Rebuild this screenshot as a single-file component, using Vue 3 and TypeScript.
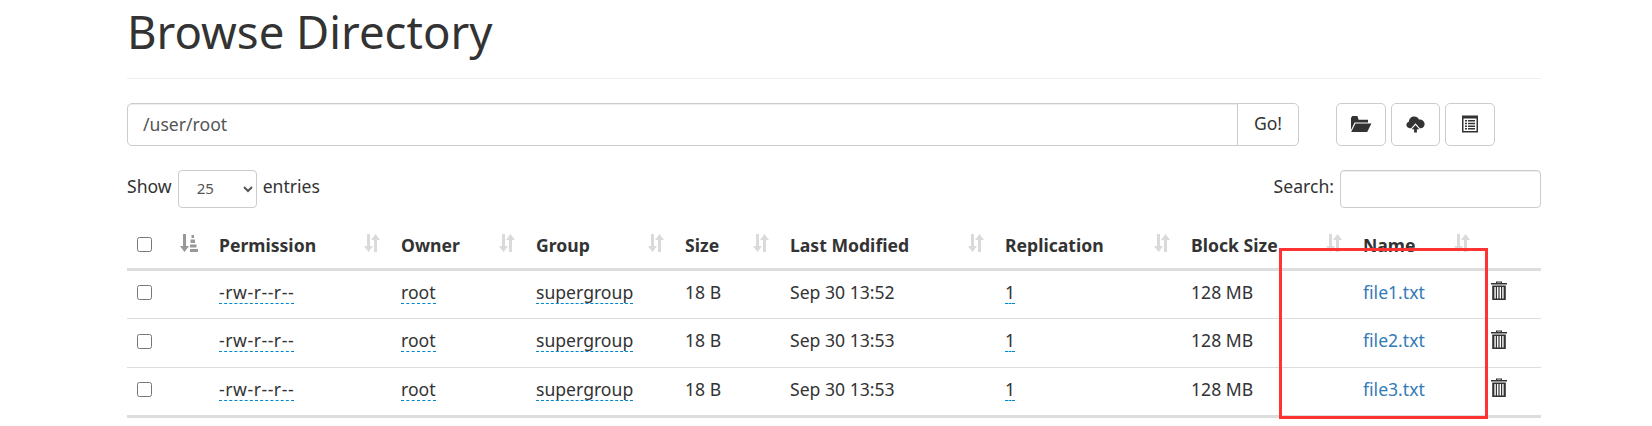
<template>
  <div class="page">
    <h1 class="title">Browse Directory</h1>
    <hr class="rule" />

    <div class="toolbar">
      <div class="path-group">
        <input class="path-input" type="text" value="/user/root" />
        <button class="go-btn" type="button">Go!</button>
      </div>
      <div class="actions">
        <button class="icon-btn" type="button">
          <svg width="22" height="18" viewBox="0 0 22 18">
            <path d="M1 3V15L4.6 7.4H18V4.8H8.6L7.4 1H2.2L1 3Z" fill="#333" />
            <path d="M5.4 8.6H21.4L17.2 17H1.2Z" fill="#333" />
          </svg>
        </button>
        <button class="icon-btn" type="button">
          <svg width="19" height="18" viewBox="0 0 20 18">
            <path d="M4 13.4C1.8 13.4 .4 11.8 .4 9.9C.4 8.2 1.5 6.9 3 6.5C3.3 3.4 5.6 1.2 8.6 1.2C10.9 1.2 12.8 2.4 13.8 4.4C16.8 4.2 19.6 6.2 19.6 9.2C19.6 11.6 17.8 13.4 15.4 13.4H14.6L10 8.2L5.4 13.4Z" fill="#333" />
            <path d="M10 10L14 14.6H11.5V18H8.5V14.6H6Z" fill="#333" />
          </svg>
        </button>
        <button class="icon-btn" type="button">
          <svg width="16" height="18" viewBox="0 0 16 18">
            <path fill-rule="evenodd" d="M0 .5H16V17.5H0ZM1.5 3.5V16H14.5V3.5Z" fill="#333" />
            <path d="M3 5H5V6.5H3ZM6 5H13V6.5H6ZM3 7.7H5V9.2H3ZM6 7.7H13V9.2H6ZM3 10.4H5V11.9H3ZM6 10.4H13V11.9H6ZM3 13H5V14.5H3ZM6 13H13V14.5H6Z" fill="#333" />
          </svg>
        </button>
      </div>
    </div>

    <div class="controls">
      <label class="length">
        <span class="label-text">Show</span>
        <select class="length-select">
          <option>25</option>
        </select>
        <span class="label-text">entries</span>
      </label>
      <label class="search">
        <span class="label-text">Search:</span>
        <input class="search-input" type="search" />
      </label>
    </div>

    <table class="files">
      <thead>
        <tr>
          <th>
            <div class="th-inner">
              <input class="check" type="checkbox" />
              <svg class="sort-icon sort-icon--active" width="18" height="18" viewBox="0 0 18 18">
                <path d="M3 0H6V12H9L4.5 18L0 12H3Z" />
                <path d="M11.5 1H14V4H11.5ZM10.5 5.5H15V9H10.5ZM10 10.5H16.5V13.5H10ZM10 15H18V18H10Z" />
              </svg>
            </div>
          </th>
          <th v-for="col in columns" :key="col">
            <div class="th-inner">
              <span class="th-label">{{ col }}</span>
              <svg class="sort-icon" width="16" height="18" viewBox="0 0 16 18">
                <path d="M3 0H6V12H9L4.5 18L0 12H3Z" />
                <path d="M10 18H13V6H16L11.5 0L7 6H10Z" />
              </svg>
            </div>
          </th>
          <th></th>
        </tr>
      </thead>
      <tbody>
        <tr v-for="file in files" :key="file.name">
          <td><input class="check" type="checkbox" /></td>
          <td><span class="editable editable--perm">-rw-r--r--</span></td>
          <td><span class="editable">root</span></td>
          <td><span class="editable">supergroup</span></td>
          <td><span class="cell-text">18 B</span></td>
          <td><span class="cell-text">{{ file.modified }}</span></td>
          <td><span class="editable">1</span></td>
          <td><span class="cell-text">128 MB</span></td>
          <td><a class="cell-text file-link" href="#">{{ file.name }}</a></td>
          <td>
            <svg class="trash" width="16" height="19" viewBox="0 0 16 19">
              <path d="M5 2V.5H11V2H16V3.6H0V2ZM6.3 2H9.7V1.4H6.3Z" fill="#333" fill-rule="evenodd" />
              <path fill-rule="evenodd" fill="#333" d="M1.2 4.6H14.8V19H1.2ZM3.4 6V17.4H4.8V6ZM6 6V17.4H7.4V6ZM8.6 6V17.4H10V6ZM11.2 6V17.4H12.6V6Z" />
            </svg>
          </td>
        </tr>
      </tbody>
    </table>

    <div class="highlight"></div>
  </div>
</template>

<script setup lang="ts">
interface FileRow {
  name: string
  modified: string
}

const columns = ['Permission', 'Owner', 'Group', 'Size', 'Last Modified', 'Replication', 'Block Size', 'Name']

const files: FileRow[] = [
  { name: 'file1.txt', modified: 'Sep 30 13:52' },
  { name: 'file2.txt', modified: 'Sep 30 13:53' },
  { name: 'file3.txt', modified: 'Sep 30 13:53' }
]
</script>

<style>
html, body { background: #fff; overflow: hidden; }
</style>

<style scoped>
.page {
  position: relative;
  box-sizing: border-box;
  width: 1541px;
  height: 426px;
  padding-left: 127px;
  font-family: "Noto Sans", sans-serif;
  font-size: 17.6px;
  color: #333;
}

.title {
  margin: 0;
  height: 78px;
  font-size: 45.5px;
  font-weight: 400;
  line-height: 62px;
}

.rule {
  margin: 0 0 24px;
  border: 0;
  border-top: 1px solid #eee;
}

.toolbar {
  display: flex;
  height: 43px;
}

.path-group {
  display: flex;
  width: 1172px;
}

.path-input {
  flex: 1;
  min-width: 0;
  height: 43px;
  box-sizing: border-box;
  padding: 0 15px 2px;
  font: inherit;
  color: #555;
  border: 1px solid #ccc;
  border-radius: 5px 0 0 5px;
  box-shadow: inset 0 1px 1px rgba(0, 0, 0, .075);
  outline: none;
}

.go-btn {
  width: 62px;
  margin-left: -1px;
  padding: 0 0 3px;
  font: inherit;
  color: #333;
  background: #fff;
  border: 1px solid #ccc;
  border-radius: 0 5px 5px 0;
}

.actions {
  display: flex;
  gap: 5px;
  margin-left: 37px;
}

.icon-btn {
  display: flex;
  align-items: center;
  justify-content: center;
  width: 49.5px;
  height: 43px;
  padding: 0 0 1px;
  background: #fff;
  border: 1px solid #ccc;
  border-radius: 5px;
}

.controls {
  display: flex;
  justify-content: space-between;
  margin-top: 24px;
  height: 38px;
}

.length, .search {
  display: flex;
  align-items: center;
  gap: 6px;
}

.label-text { margin-bottom: 6px; }

.length-select {
  width: 79px;
  height: 38px;
  padding: 0 14px 3px;
  font: inherit;
  font-size: 15px;
  color: #555;
  background: #fff;
  border: 1px solid #ccc;
  border-radius: 4px;
}

.search-input {
  width: 201px;
  height: 38px;
  box-sizing: border-box;
  border: 1px solid #ccc;
  border-radius: 4px;
  box-shadow: inset 0 1px 1px rgba(0, 0, 0, .075);
  outline: none;
}

.files {
  width: 1414px;
  margin-top: 14px;
  border-collapse: collapse;
  table-layout: fixed;
}

.files th:nth-child(1) { width: 82px; }
.files th:nth-child(2) { width: 182px; }
.files th:nth-child(3) { width: 135px; }
.files th:nth-child(4) { width: 149px; }
.files th:nth-child(5) { width: 105px; }
.files th:nth-child(6) { width: 215px; }
.files th:nth-child(7) { width: 186px; }
.files th:nth-child(8) { width: 172px; }
.files th:nth-child(9) { width: 128px; }
.files th:nth-child(10) { width: 60px; }

.files th {
  box-sizing: border-box;
  height: 47px;
  padding: 0 11px 0 10px;
  font-weight: 700;
  text-align: left;
  vertical-align: middle;
  border-bottom: 3px solid #ddd;
}

.th-inner {
  display: flex;
  align-items: center;
  justify-content: space-between;
}

.sort-icon {
  flex-shrink: 0;
  margin-top: -4px;
  fill: #000;
  opacity: .14;
}

.sort-icon--active { opacity: .4; }

.files td {
  box-sizing: border-box;
  height: 49px;
  padding: 0 10px 5px;
  border-bottom: 1px solid #ddd;
}

.files tbody tr:last-child td { border-bottom-width: 3px; }

.check {
  display: block;
  width: 15px;
  height: 15px;
  margin: 0;
}

.files td .check { margin-top: 2px; }

.editable {
  display: inline-block;
  line-height: 22px;
  border-bottom: 1px dashed #0088cc;
}

.editable--perm { letter-spacing: .55px; }

.file-link {
  color: #337ab7;
  text-decoration: none;
}

.trash { display: block; margin-top: -2px; }

.highlight {
  position: absolute;
  left: 1279px;
  top: 248px;
  width: 203px;
  height: 165px;
  border: 3px solid #f33;
}
</style>
